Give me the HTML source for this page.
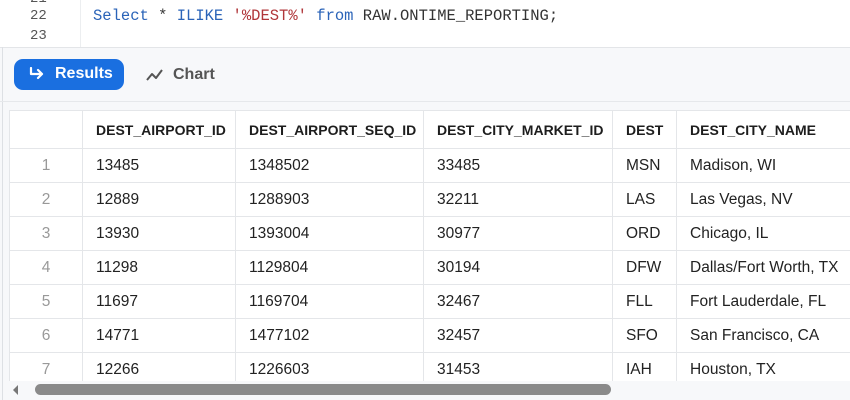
<!DOCTYPE html>
<html><head><style>
body{margin:0;width:850px;height:400px;overflow:hidden;background:#f7f8fa;font-family:"Liberation Sans",sans-serif;position:relative}
.ed{position:absolute;left:0;top:0;width:850px;height:47px;background:#fff;border-bottom:1px solid #e3e5e8}
.gut{position:absolute;left:0;top:0;width:80px;height:47px;border-right:1px solid #eceef0}
.ln{position:absolute;left:30px;font:14px "Liberation Mono",monospace;color:#555}
.code{position:absolute;left:93px;top:7px;font:15.5px "Liberation Mono",monospace;color:#333;white-space:pre}
.kw{color:#2a63b8}.str{color:#b0363a}
.lb{position:absolute;left:2px;top:47px;width:1px;height:353px;background:#dde0e4}
.btn{position:absolute;left:14px;top:59px;width:110px;height:31px;background:#1a6fe0;border-radius:9px;color:#fff;font-weight:bold;font-size:16px}
.chart{position:absolute;left:146px;top:66px;color:#555;font-size:16px;font-weight:bold}
.sep{position:absolute;left:0;top:101px;width:850px;height:1px;background:#e6e8eb}
table{position:absolute;left:9px;top:110px;border-collapse:collapse;background:#fff;font-size:15.5px;color:#222;table-layout:fixed;width:1020px}
td,th{border:1px solid #e4e6e9;height:33px;padding:0 13px;text-align:left;white-space:nowrap;overflow:hidden}
th{height:37px;font-weight:bold;font-size:14px;color:#1d1d1d}
td.n{color:#999;text-align:center;padding:0}
.sb{position:absolute;left:35px;top:384px;width:576px;height:11px;border-radius:6px;background:#8a8a8a}
.ar{position:absolute;left:13px;top:385px;width:0;height:0;border-top:5px solid transparent;border-bottom:5px solid transparent;border-right:5px solid #777}
</style></head><body>
<div class="ed"><div class="gut"></div>
<div class="ln" style="top:-9px">21</div><div class="ln" style="top:8px">22</div><div class="ln" style="top:28px">23</div>
<div class="code"><span class="kw">Select</span> * <span class="kw">ILIKE</span> <span class="str">'%DEST%'</span> <span class="kw">from</span> RAW.ONTIME_REPORTING;</div></div>
<div class="lb"></div>
<div class="btn"><svg style="position:absolute;left:14px;top:8px" width="18" height="15" viewBox="0 0 18 15"><path d="M3 1v6h11M10 3l4 4-4 4" fill="none" stroke="#fff" stroke-width="2.2" stroke-linecap="round" stroke-linejoin="round"/></svg><span style="position:absolute;left:41px;top:6px">Results</span></div>
<div class="chart"><svg style="position:absolute;left:0;top:2px" width="18" height="14" viewBox="0 0 18 14"><path d="M1 12l5-6 4 4 6-8" fill="none" stroke="#555" stroke-width="2" stroke-linejoin="round"/></svg><span style="position:absolute;left:27px;top:0">Chart</span></div>
<div class="sep"></div>
<table>
<colgroup><col style="width:73px"><col style="width:153px"><col style="width:188px"><col style="width:189px"><col style="width:64px"><col style="width:353px"></colgroup>
<tr><th></th><th>DEST_AIRPORT_ID</th><th>DEST_AIRPORT_SEQ_ID</th><th>DEST_CITY_MARKET_ID</th><th>DEST</th><th>DEST_CITY_NAME</th></tr>
<tr><td class="n">1</td><td>13485</td><td>1348502</td><td>33485</td><td>MSN</td><td>Madison, WI</td></tr>
<tr><td class="n">2</td><td>12889</td><td>1288903</td><td>32211</td><td>LAS</td><td>Las Vegas, NV</td></tr>
<tr><td class="n">3</td><td>13930</td><td>1393004</td><td>30977</td><td>ORD</td><td>Chicago, IL</td></tr>
<tr><td class="n">4</td><td>11298</td><td>1129804</td><td>30194</td><td>DFW</td><td>Dallas/Fort Worth, TX</td></tr>
<tr><td class="n">5</td><td>11697</td><td>1169704</td><td>32467</td><td>FLL</td><td>Fort Lauderdale, FL</td></tr>
<tr><td class="n">6</td><td>14771</td><td>1477102</td><td>32457</td><td>SFO</td><td>San Francisco, CA</td></tr>
<tr><td class="n">7</td><td>12266</td><td>1226603</td><td>31453</td><td>IAH</td><td>Houston, TX</td></tr>
</table>
<div style="position:absolute;left:9px;top:381px;width:841px;height:19px;background:#f7f8fa"></div>
<div class="ar"></div><div class="sb"></div>
</body></html>
